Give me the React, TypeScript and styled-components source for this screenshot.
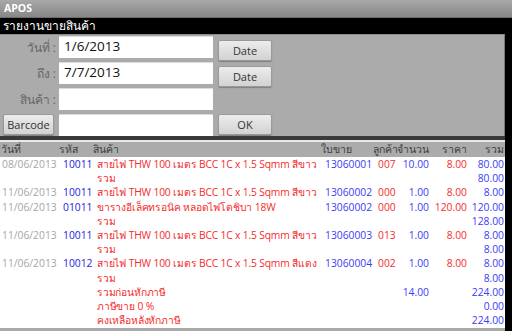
import React from 'react'
import styled, { createGlobalStyle } from 'styled-components'

const GlobalStyle = createGlobalStyle`
  html, body {
    margin: 0;
    padding: 0;
    background: #000;
  }
  body {
    width: 512px;
    height: 331px;
    overflow: hidden;
    font-family: "Open Sans", "Noto Sans", "DejaVu Sans", sans-serif;
  }
`

const Screen = styled.div`
  display: flex;
  flex-direction: column;
  height: 331px;
`

const TitleBar = styled.div`
  height: 17px;
  line-height: 17px;
  padding-left: 4px;
  background: linear-gradient(#a8a8a8, #878787);
  border-bottom: 1px solid #6c6c6c;
  color: #fff;
  font-weight: bold;
  font-size: 10.5px;
`

const Heading = styled.div`
  height: 16px;
  line-height: 16px;
  padding-left: 3px;
  color: #fff;
  font-size: 12px;
`

const Body = styled.div`
  flex: 1;
  display: flex;
  flex-direction: column;
  width: 505px;
`

const FormPanel = styled.div`
  display: grid;
  grid-template-columns: 54px 154px 54px;
  grid-auto-rows: 22px;
  column-gap: 5px;
  row-gap: 4px;
  padding-top: 1px;
  height: 102px;
  box-sizing: border-box;
  background: #ababab;
  border-top: 1px solid #8a8a8a;
  border-right: 1px solid #777;
`

const Label = styled.div`
  display: flex;
  align-items: flex-end;
  justify-content: flex-end;
  padding: 0 0 1px 0;
  margin-right: -2px;
  color: #666;
  font-size: 12px;
`

const Input = styled.div`
  background: #fff;
  color: #111;
  font-size: 13.5px;
  line-height: 18px;
  padding: 1px 5px 0;
  box-shadow: inset 0 1px 1px rgba(0, 0, 0, 0.15);
`

const Button = styled.div<{ $offset?: number; $left?: number }>`
  margin-top: ${(p) => p.$offset ?? 0}px;
  margin-left: ${(p) => p.$left ?? 0}px;
  height: 21px;
  display: flex;
  align-items: center;
  justify-content: center;
  background: linear-gradient(#ececec, #d2d2d2);
  border: 1px solid #9a9a9a;
  border-radius: 2px;
  box-sizing: border-box;
  box-shadow: 0 1px 1px rgba(0, 0, 0, 0.25);
  color: #333;
  font-size: 11px;
`

const Divider = styled.div`
  height: 6px;
  box-sizing: border-box;
  border-top: 4px solid #3a3a3a;
  background: #e8e8e8;
`

const Table = styled.div`
  flex: 1;
  background: #fff;
  display: flex;
  flex-direction: column;
`

const Grid = styled.div<{ $header?: boolean }>`
  display: grid;
  grid-template-columns: 59px 34px 228px 52px 17px 39px 38px 37px;
  height: ${(p) => (p.$header ? 15 : 14.2)}px;
  line-height: ${(p) => (p.$header ? 15 : 14.2)}px;
  font-size: ${(p) => (p.$header ? 10.5 : 10.3)}px;
  background: ${(p) => (p.$header ? '#ababab' : 'transparent')};
  white-space: nowrap;
`

const Cell = styled.div<{ $right?: boolean; $color?: string; $pad?: number; $clip?: boolean }>`
  text-align: ${(p) => (p.$right ? 'right' : 'left')};
  padding-left: ${(p) => p.$pad ?? 0}px;
  color: ${(p) => p.$color ?? '#3d3d3d'};
  overflow: ${(p) => (p.$clip ? 'hidden' : 'visible')};
  letter-spacing: ${(p) => (p.$clip ? '-0.17px' : 'normal')};
`

const Footer = styled.div`
  margin-top: auto;
  height: 3px;
  background: #a9a9a9;
`

const GRAY = '#a6a6a6'
const BLUE = '#3c3cf6'
const DBLUE = '#1c1ce0'
const RED = '#f52c2c'

type Line = {
  date?: string
  code?: string
  name: string
  bill?: string
  cust?: string
  qty?: string
  price?: string
  total?: string
}

const WIRE = 'สายไฟ THW 100 เมตร BCC 1C x 1.5 Sqmm'

const lines: Line[] = [
  { date: '08/06/2013', code: '10011', name: `${WIRE} สีขาว`, bill: '13060001', cust: '007', qty: '10.00', price: '8.00', total: '80.00' },
  { name: 'รวม', total: '80.00' },
  { date: '11/06/2013', code: '10011', name: `${WIRE} สีขาว`, bill: '13060002', cust: '000', qty: '1.00', price: '8.00', total: '8.00' },
  { date: '11/06/2013', code: '01011', name: 'ขารางอีเล็คทรอนิค หลอดไฟโตชิบา 18W', bill: '13060002', cust: '000', qty: '1.00', price: '120.00', total: '120.00' },
  { name: 'รวม', total: '128.00' },
  { date: '11/06/2013', code: '10011', name: `${WIRE} สีขาว`, bill: '13060003', cust: '013', qty: '1.00', price: '8.00', total: '8.00' },
  { name: 'รวม', total: '8.00' },
  { date: '11/06/2013', code: '10012', name: `${WIRE} สีแดง`, bill: '13060004', cust: '002', qty: '1.00', price: '8.00', total: '8.00' },
  { name: 'รวม', total: '8.00' },
  { name: 'รวมก่อนหักภาษี', qty: '14.00', total: '224.00' },
  { name: 'ภาษีขาย 0 %', total: '0.00' },
  { name: 'คงเหลือหลังหักภาษี', total: '224.00' },
]

export default function App() {
  return (
    <Screen>
      <GlobalStyle />
      <TitleBar>APOS</TitleBar>
      <Heading>รายงานขายสินค้า</Heading>
      <Body>
        <FormPanel>
          <Label>วันที่ :</Label>
          <Input>1/6/2013</Input>
          <Button $offset={4}>Date</Button>

          <Label>ถึง :</Label>
          <Input>7/7/2013</Input>
          <Button $offset={4}>Date</Button>

          <Label>สินค้า :</Label>
          <Input />
          <div />

          <Button $left={3}>Barcode</Button>
          <Input />
          <Button>OK</Button>
        </FormPanel>
        <Divider />
        <Table>
          <Grid $header>
            <Cell $pad={1}>วันที่</Cell>
            <Cell>รหัส</Cell>
            <Cell>สินค้า</Cell>
            <Cell>ใบขาย</Cell>
            <Cell>ลูกค้า</Cell>
            <Cell $right>จำนวน</Cell>
            <Cell $right>ราคา</Cell>
            <Cell $right>รวม</Cell>
          </Grid>
          {lines.map((l, i) => (
            <Grid key={i}>
              <Cell $pad={2} $color={GRAY}>{l.date}</Cell>
              <Cell $pad={4} $color={DBLUE}>{l.code}</Cell>
              <Cell $pad={4} $color={RED} $clip>{l.name}</Cell>
              <Cell $pad={4} $color={BLUE}>{l.bill}</Cell>
              <Cell $pad={5} $color={RED}>{l.cust}</Cell>
              <Cell $right $color={BLUE}>{l.qty}</Cell>
              <Cell $right $color={RED}>{l.price}</Cell>
              <Cell $right $color={BLUE}>{l.total}</Cell>
            </Grid>
          ))}
          <Footer />
        </Table>
      </Body>
    </Screen>
  )
}
